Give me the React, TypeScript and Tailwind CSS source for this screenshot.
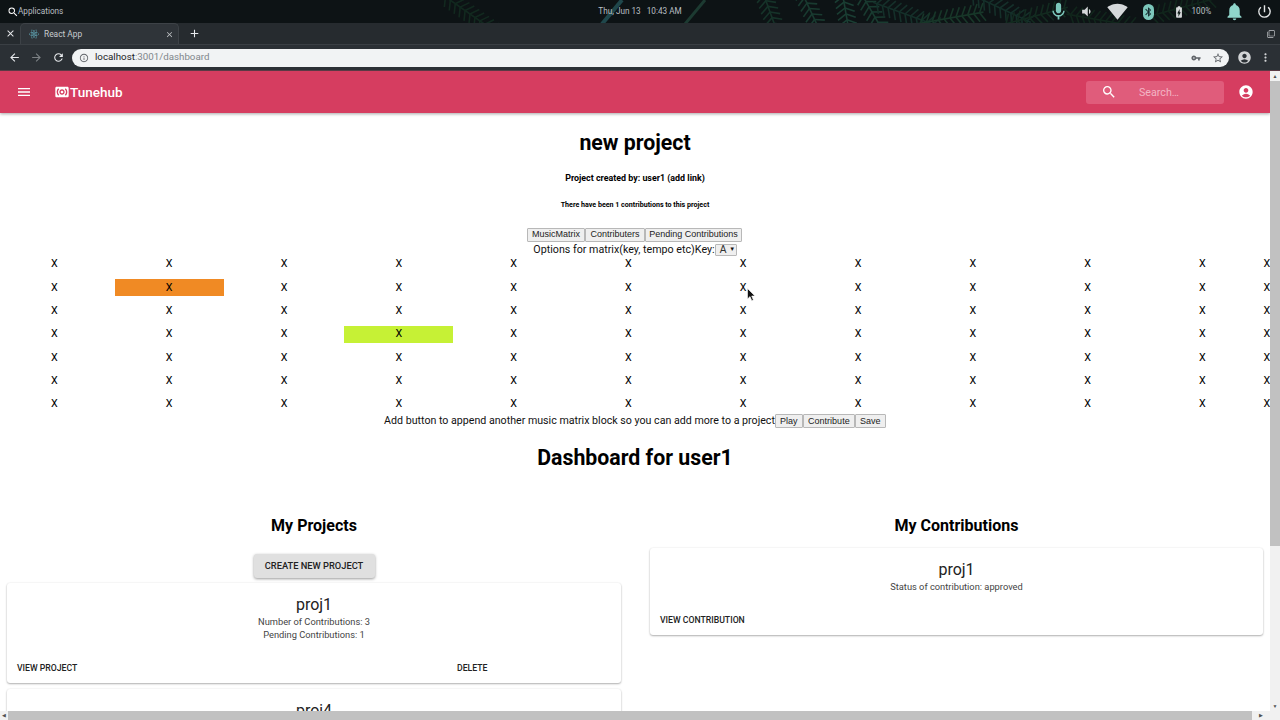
import React from 'react';
import {
  MdMenu, MdSearch, MdAccountCircle, MdSurroundSound, MdMic, MdNotifications, MdPowerSettingsNew,
  MdVpnKey, MdStarBorder, MdMoreVert, MdArrowBack, MdArrowForward, MdRefresh, MdInfoOutline,
  MdClose, MdAdd, MdVolumeDown, MdSignalWifi4Bar, MdBatteryChargingFull, MdFilterNone, MdBluetooth,
} from 'react-icons/md';
import { FaReact } from 'react-icons/fa';

const rows = [0, 1, 2, 3, 4, 5, 6];
const cols = [0, 1, 2, 3, 4, 5, 6, 7, 8, 9, 10, 11];

function Wallpaper() {
  // fern fronds behind the desktop bar
  const fronds = [
    [470, 14, 35, '#12291f'], [770, 12, 70, '#163329'], [812, 14, 65, '#193b30'], [845, 8, 80, '#1a3e33'], [872, 12, 60, '#193b30'],
    [905, 14, 20, '#15302a'], [950, 18, -10, '#183729'], [1000, 8, 25, '#15302a'], [1035, 16, -15, '#132b20'],
    [1100, 20, 10, '#11261c'], [1180, 8, -15, '#11261c'],
  ] as const;
  return (
    <svg className="absolute inset-0" width="1280" height="23" viewBox="0 0 1280 23">
      <line x1="602" y1="24" x2="622" y2="0" stroke="#2b6a70" strokeWidth="4" opacity="0.6" />
      <line x1="685" y1="24" x2="705" y2="0" stroke="#1c3a31" strokeWidth="3" />
      {fronds.map(([x, y, r, color], i) => (
        <g key={i} transform={`translate(${x} ${y}) rotate(${r})`} stroke={color} strokeWidth="1.6">
          <line x1="-34" y1="0" x2="34" y2="0" />
          {[-30, -24, -18, -12, -6, 0, 6, 12, 18, 24, 30].map((d) => (
            <g key={d}>
              <line x1={d} y1="0" x2={d + 5} y2="-9" />
              <line x1={d} y1="0" x2={d + 5} y2="9" />
            </g>
          ))}
        </g>
      ))}
    </svg>
  );
}

function DesktopBar() {
  return (
    <div className="relative h-[23px] shrink-0 bg-[#0d1315] overflow-hidden text-[#b9bfc2] text-[8.2px]">
      <Wallpaper />
      <div className="relative flex items-center w-full h-full">
        <MdSearch className="ml-[7px] text-[12px] text-white" />
        <span className="-ml-[1px]">Applications</span>
        <span className="ml-[535px]">Thu, Jun 13 &nbsp; 10:43 AM</span>
        <div className="ml-auto mr-[7px] flex items-center">
          <MdMic className="text-[21px] text-[#7cc7bb]" />
          <MdVolumeDown className="ml-[10px] text-[15px] text-[#d5d8da]" />
          <MdSignalWifi4Bar className="ml-[13px] text-[21px] text-[#d5d8da]" />
          <span className="ml-[15px] w-[11px] h-[16px] rounded-[6px] bg-[#7cc7bb] flex items-center justify-center">
            <MdBluetooth className="text-[12px] text-[#12262a]" />
          </span>
          <MdBatteryChargingFull className="ml-[17.5px] text-[14px] text-[#d5d8da]" />
          <span className="ml-[6px] w-[22px]">100%</span>
          <MdNotifications className="ml-[10.5px] text-[21px] text-[#8fd5ca]" />
          <MdPowerSettingsNew className="ml-[11px] text-[17px] text-[#e4e6e7]" />
        </div>
      </div>
    </div>
  );
}

function BrowserChrome() {
  return (
    <div className="shrink-0 bg-[#2b3035]">
      <div className="h-[21px] bg-[#262b2f] flex items-end">
        <div className="w-[20px] h-full flex items-center justify-center">
          <MdClose className="text-[11px] text-[#e8eaed]" />
        </div>
        <div className="w-[159px] h-[21px] bg-[#2f3439] rounded-t-[5px] border border-b-0 border-[#3d4247] flex items-center pl-[8px] pr-[4px]">
          <FaReact className="text-[10px] text-[#61a8b8]" />
          <span className="ml-[5px] pt-[1px] text-[8.4px] text-[#c8cbce]">React App</span>
          <MdClose className="ml-auto text-[9px] text-[#bfc2c5]" />
        </div>
        <div className="w-[30px] h-full flex items-center justify-center">
          <MdAdd className="text-[13px] text-[#e8eaed]" />
        </div>
        <div className="ml-auto w-[18px] h-full flex items-center justify-center">
          <MdFilterNone className="text-[8px] text-[#c5c8cb]" />
        </div>
      </div>
      <div className="h-[26px] border-t border-[#3a3f44] flex items-center">
        <MdArrowBack className="ml-[8px] text-[13px] text-[#e8eaed]" />
        <MdArrowForward className="ml-[9px] text-[13px] text-[#7d8185]" />
        <MdRefresh className="ml-[9px] text-[13px] text-[#e8eaed]" />
        <div className="ml-[7px] w-[1157px] h-[18px] rounded-full bg-[#f1f3f4] flex items-center pl-[7px] pr-[5px] text-[9.75px]">
          <MdInfoOutline className="text-[10px] text-[#5f6368]" />
          <span className="ml-[6px] text-[#202124]">localhost</span>
          <span className="text-[#80868b]">:3001/dashboard</span>
          <MdVpnKey className="ml-auto text-[10px] text-[#5f6368]" />
          <MdStarBorder className="ml-[11px] text-[12px] text-[#5f6368]" />
        </div>
        <MdAccountCircle className="ml-[7.5px] text-[15px] text-[#d2d4d6]" />
        <MdMoreVert className="ml-[7px] text-[13px] text-[#d2d4d6]" />
      </div>
      <div className="h-px bg-[#5b3a45]" />
    </div>
  );
}

function AppBar() {
  return (
    <header className="h-[42px] shrink-0 bg-[#d63d60] shadow-[0_1px_3px_rgba(0,0,0,0.35)] flex items-center text-white relative">
      <MdMenu className="ml-[16px] text-[16px]" />
      <MdSurroundSound className="ml-[22px] text-[16px]" />
      <span className="text-[13.5px] font-medium">Tunehub</span>
      <div className="ml-auto w-[138px] h-[23px] rounded-[3px] bg-[#e05c7b] flex items-center pl-[15px] mr-[14px]">
        <MdSearch className="text-[16px]" />
        <span className="ml-[22px] pt-[2px] text-[10.7px] text-[#f3b5c4]">Search…</span>
      </div>
      <MdAccountCircle className="mr-[16px] text-[16px]" />
    </header>
  );
}

function LegacyButton({ label, className }: { label: string; className: string }) {
  return (
    <button className={`border border-[#b8b8b8] bg-[#efefef] rounded-[1px] text-[9px] text-[#222] font-['Liberation_Sans',sans-serif] flex items-center justify-center ${className}`}>
      {label}
    </button>
  );
}

function MusicMatrix() {
  return (
    <div className="flex flex-col gap-[6.33px] w-[1270px] shrink-0 overflow-hidden">
      {rows.map((row) => (
        <div key={row} className="flex gap-[6px] h-[17px] shrink-0">
          {cols.map((col) => (
            <div
              key={col}
              className={`shrink-0 flex items-center justify-center text-[10.7px] text-black ${col === 11 ? 'w-[8px]' : 'w-[108.8px]'} ${
                row === 1 && col === 1 ? 'bg-[#f08a24]' : row === 3 && col === 3 ? 'bg-[#c6f135]' : ''
              }`}
            >
              X
            </div>
          ))}
        </div>
      ))}
    </div>
  );
}

function Card({ title, lines, actions, className }: { title: string; lines: string[]; actions: React.ReactNode; className: string }) {
  return (
    <div className={`bg-white rounded-[3px] shrink-0 shadow-[0_1px_2px_rgba(0,0,0,0.3),0_0_2px_rgba(0,0,0,0.08)] flex flex-col items-center ${className}`}>
      <div className="mt-[12px] text-[16px] leading-[20px] text-[#222]">{title}</div>
      {lines.map((line) => (
        <div key={line} className="text-[9.3px] leading-[13px] text-[#444]">{line}</div>
      ))}
      {actions}
    </div>
  );
}

function ActionLabel({ label, className }: { label: string; className?: string }) {
  return <span className={`text-[8.7px] font-medium text-[#222] ${className ?? ''}`}>{label}</span>;
}

export default function App() {
  return (
    <div className="relative w-[1280px] h-[720px] overflow-hidden flex flex-col bg-white font-['Roboto',sans-serif]">
      <DesktopBar />
      <BrowserChrome />
      <div className="flex flex-1 min-h-0">
        <div className="w-[1270px] flex flex-col min-h-0">
          <div className="flex-1 min-h-0 flex flex-col overflow-hidden">
            <AppBar />
            <main className="flex-1 min-h-0 overflow-hidden flex flex-col items-center">
              <h1 className="shrink-0 mt-[16px] h-[28px] leading-[28px] text-[21.3px] font-bold text-black">new project</h1>
              <p className="shrink-0 mt-[15px] h-[12px] leading-[12px] text-[8.9px] font-bold text-black">Project created by: user1 (add link)</p>
              <p className="shrink-0 mt-[15px] h-[12px] leading-[12px] text-[7.1px] font-bold text-black">There have been 1 contributions to this project</p>
              <div className="shrink-0 mt-[17px] flex h-[14px] pr-[1px]">
                <LegacyButton label="MusicMatrix" className="w-[58px]" />
                <LegacyButton label="Contributers" className="w-[60px]" />
                <LegacyButton label="Pending Contributions" className="w-[97px]" />
              </div>
              <div className="shrink-0 mt-[1px] h-[13px] flex items-center text-[10.7px] text-[#111]">
                <span className="pt-[1px]">Options for matrix(key, tempo etc)Key:</span>
                <span className="w-[22px] h-[12px] border border-[#b8b8b8] bg-[#efefef] rounded-[1px] flex items-center pl-[4px] text-[10px] text-[#333] font-['Liberation_Sans',sans-serif]">
                  A<span className="ml-[3px] text-[6px] text-[#111]">▼</span>
                </span>
              </div>
              <MusicMatrix />
              <div className="shrink-0 mt-[1px] h-[15px] flex items-center text-[10.65px] text-[#111]">
                <span>Add button to append another music matrix block so you can add more to a project</span>
                <LegacyButton label="Play" className="w-[28px] h-[14px]" />
                <LegacyButton label="Contribute" className="w-[52px] h-[14px]" />
                <LegacyButton label="Save" className="w-[31px] h-[14px]" />
              </div>
              <h1 className="shrink-0 mt-[15px] h-[28px] leading-[28px] text-[21.3px] font-bold text-black">Dashboard for user1</h1>
              <div className="shrink-0 mt-[42px] w-full flex px-[7px] gap-[29px]">
                <section className="w-[614px] flex flex-col items-center shrink-0">
                  <h2 className="h-[24px] leading-[24px] text-[16px] font-bold text-black">My Projects</h2>
                  <button className="mt-[16px] w-[121px] h-[24px] rounded-[3px] bg-[#e0e0e0] shadow-[0_1px_3px_rgba(0,0,0,0.4)] text-[9.3px] font-medium text-[#222]">
                    CREATE NEW PROJECT
                  </button>
                  <Card
                    className="mt-[5px] w-full h-[100px]"
                    title="proj1"
                    lines={['Number of Contributions: 3', 'Pending Contributions: 1']}
                    actions={
                      <div className="mt-auto mb-[7.5px] w-full flex pl-[10px]">
                        <ActionLabel label="VIEW PROJECT" className="w-[440px]" />
                        <ActionLabel label="DELETE" />
                      </div>
                    }
                  />
                  <Card className="mt-[6px] w-full h-[99px]" title="proj4" lines={[]} actions={null} />
                </section>
                <section className="w-[613px] flex flex-col items-center shrink-0">
                  <h2 className="h-[24px] leading-[24px] text-[16px] font-bold text-black">My Contributions</h2>
                  <Card
                    className="mt-[10px] w-full h-[87px]"
                    title="proj1"
                    lines={['Status of contribution: approved']}
                    actions={
                      <div className="mt-auto mb-[7.5px] w-full flex pl-[10px]">
                        <ActionLabel label="VIEW CONTRIBUTION" />
                      </div>
                    }
                  />
                </section>
              </div>
            </main>
          </div>
          {/* horizontal scrollbar */}
          <div className="h-[9px] shrink-0 bg-[#f1f1f1] flex items-center">
            <span className="w-[8px] text-center text-[5px] leading-none text-[#505050]">◀</span>
            <div className="h-full flex-1 bg-[#c1c1c1]" />
            <span className="w-[18px] text-center text-[5px] leading-none text-[#505050]">▶</span>
          </div>
        </div>
        {/* vertical scrollbar */}
        <div className="w-[10px] shrink-0 bg-[#f1f1f1] flex flex-col items-center">
          <span className="h-[10px] text-[5px] leading-[10px] text-[#505050]">▲</span>
          <div className="w-full h-[465px] bg-[#c1c1c1]" />
          <span className="mt-auto mb-[9px] h-[10px] text-[5px] leading-[10px] text-[#505050]">▼</span>
        </div>
      </div>
      {/* mouse pointer */}
      <svg className="absolute left-[747px] top-[288px]" width="9" height="14" viewBox="0 0 9 14">
        <path d="M0.5 0.5 L0.5 11 L3 8.6 L4.8 12.8 L6.4 12 L4.7 8 L8 8 Z" fill="#111" stroke="#fff" strokeWidth="0.6" />
      </svg>
    </div>
  );
}
